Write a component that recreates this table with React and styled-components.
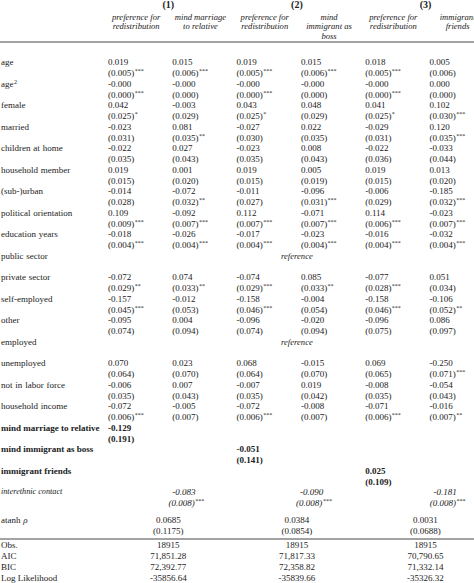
import React from 'react';
import styled, {createGlobalStyle, css} from 'styled-components';

const Global = createGlobalStyle`
  html, body {
    margin: 0;
    padding: 0;
    background: #fff;
    overflow: hidden;
  }
`;

const serif = css`
  font-family: "Liberation Serif", "Times New Roman", serif;
  color: #222;
`;

const Table = styled.div`
  ${serif}
  display: grid;
  grid-template-columns: 104px repeat(6, 64.3px);
  width: 490px;
  font-size: 9px;
  line-height: 10.75px;
`;

const ModelNo = styled.div`
  grid-column: span 2;
  text-align: center;
  font-size: 10px;
  font-weight: 700;
  line-height: 9px;
  height: 12.5px;
`;

const Blank = styled.div`
  grid-column: ${p => p.$span || 1} span;
`;

const Head = styled.div`
  font-style: italic;
  font-size: 8.6px;
  line-height: 9.5px;
  text-align: center;
  height: 28.5px;
`;

const Rule = styled.div`
  grid-column: 1 / -1;
  height: 2px;
  background: #a3a3a3;
  margin: ${p => p.$margin || '0'};
`;

const Label = styled.div`
  white-space: nowrap;
  padding-left: 1px;
  font-size: ${p => (p.$italic ? 8.2 : 9)}px;
  word-spacing: ${p => (p.$small || p.$italic || p.$bold ? 0 : 0.6)}px;
  font-weight: ${p => (p.$bold ? 700 : 400)};
  font-style: ${p => (p.$italic ? 'italic' : 'normal')};
  margin-top: ${p => p.$top || 0}px;
`;

const Cell = styled.div`
  padding-left: 4px;
  white-space: nowrap;
  font-weight: ${p => (p.$bold ? 700 : 400)};
`;

const Line = styled.div`
  height: 10.75px;
`;

const Pair = styled.div`
  grid-column: span 2;
  white-space: nowrap;
  text-align: ${p => p.$align || 'center'};
  padding-right: ${p => p.$right || 0}px;
  font-style: ${p => (p.$italic ? 'italic' : 'normal')};
  margin-top: ${p => p.$top || 0}px;
`;

const Reference = styled.div`
  grid-column: span 6;
  font-style: italic;
  font-size: 8.6px;
  text-align: center;
  height: 21.5px;
`;

const Stars = styled.sup`
  font-size: 6px;
  line-height: 0;
  vertical-align: 3px;
  margin-left: 0.4px;
  margin-right: ${p => (p.$hang ? '-8.5px' : '0')};
`;

const Spacer = styled.div`
  grid-column: 1 / -1;
  height: 14.4px;
`;

const rows = [
  {label: 'age', v: [['0.019', '(0.005)', '***'], ['0.015', '(0.006)', '***'], ['0.019', '(0.005)', '***'], ['0.015', '(0.006)', '***'], ['0.018', '(0.005)', '***'], ['0.005', '(0.006)', '']]},
  {label: 'age', sq: true, v: [['-0.000', '(0.000)', '***'], ['-0.000', '(0.000)', ''], ['-0.000', '(0.000)', '***'], ['-0.000', '(0.000)', ''], ['-0.000', '(0.000)', '***'], ['0.000', '(0.000)', '']]},
  {label: 'female', v: [['0.042', '(0.025)', '*'], ['-0.003', '(0.029)', ''], ['0.043', '(0.025)', '*'], ['0.048', '(0.029)', ''], ['0.041', '(0.025)', '*'], ['0.102', '(0.030)', '***']]},
  {label: 'married', v: [['-0.023', '(0.031)', ''], ['0.081', '(0.035)', '**'], ['-0.027', '(0.030)', ''], ['0.022', '(0.035)', ''], ['-0.029', '(0.031)', ''], ['0.120', '(0.035)', '***']]},
  {label: 'children at home', v: [['-0.022', '(0.035)', ''], ['0.027', '(0.043)', ''], ['-0.023', '(0.035)', ''], ['0.008', '(0.043)', ''], ['-0.022', '(0.036)', ''], ['-0.033', '(0.044)', '']]},
  {label: 'household member', v: [['0.019', '(0.015)', ''], ['0.001', '(0.020)', ''], ['0.019', '(0.015)', ''], ['0.005', '(0.019)', ''], ['0.019', '(0.015)', ''], ['0.013', '(0.020)', '']]},
  {label: '(sub-)urban', v: [['-0.014', '(0.028)', ''], ['-0.072', '(0.032)', '**'], ['-0.011', '(0.027)', ''], ['-0.096', '(0.031)', '***'], ['-0.006', '(0.029)', ''], ['-0.185', '(0.032)', '***']]},
  {label: 'political orientation', v: [['0.109', '(0.009)', '***'], ['-0.092', '(0.007)', '***'], ['0.112', '(0.007)', '***'], ['-0.071', '(0.007)', '***'], ['0.114', '(0.006)', '***'], ['-0.023', '(0.007)', '***']]},
  {label: 'education years', v: [['-0.018', '(0.004)', '***'], ['-0.026', '(0.004)', '***'], ['-0.017', '(0.004)', '***'], ['-0.023', '(0.004)', '***'], ['-0.016', '(0.004)', '***'], ['-0.032', '(0.004)', '***']]},
  {label: 'public sector', reference: true},
  {label: 'private sector', v: [['-0.072', '(0.029)', '**'], ['0.074', '(0.033)', '**'], ['-0.074', '(0.029)', '***'], ['0.085', '(0.033)', '**'], ['-0.077', '(0.028)', '***'], ['0.051', '(0.034)', '']]},
  {label: 'self-employed', v: [['-0.157', '(0.045)', '***'], ['-0.012', '(0.053)', ''], ['-0.158', '(0.046)', '***'], ['-0.004', '(0.054)', ''], ['-0.158', '(0.046)', '***'], ['-0.106', '(0.052)', '**']]},
  {label: 'other', v: [['-0.095', '(0.074)', ''], ['0.004', '(0.094)', ''], ['-0.096', '(0.074)', ''], ['-0.020', '(0.094)', ''], ['-0.096', '(0.075)', ''], ['0.086', '(0.097)', '']]},
  {label: 'employed', reference: true},
  {label: 'unemployed', v: [['0.070', '(0.064)', ''], ['0.023', '(0.070)', ''], ['0.068', '(0.064)', ''], ['-0.015', '(0.070)', ''], ['0.069', '(0.065)', ''], ['-0.250', '(0.071)', '***']]},
  {label: 'not in labor force', v: [['-0.006', '(0.035)', ''], ['0.007', '(0.043)', ''], ['-0.007', '(0.035)', ''], ['0.019', '(0.042)', ''], ['-0.008', '(0.035)', ''], ['-0.054', '(0.043)', '']]},
  {label: 'household income', v: [['-0.072', '(0.006)', '***'], ['-0.005', '(0.007)', ''], ['-0.072', '(0.006)', '***'], ['-0.008', '(0.007)', ''], ['-0.071', '(0.006)', '***'], ['-0.016', '(0.007)', '**']]},
  {label: 'mind marriage to relative', bold: true, v: [['-0.129', '(0.191)', ''], null, null, null, null, null]},
  {label: 'mind immigrant as boss', bold: true, v: [null, null, ['-0.051', '(0.141)', ''], null, null, null]},
  {label: 'immigrant friends', bold: true, v: [null, null, null, null, ['0.025', '(0.109)', ''], null]},
];

const contact = [['-0.083', 37], ['-0.090', 38], ['-0.181', 33]];
const atanh = [['0.0685', '(0.1175)'], ['0.0384', '(0.0854)'], ['0.0031', '(0.0688)']];
const stats = [
  ['Obs.', ['18915', '18915', '18915']],
  ['AIC', ['71,851.28', '71,817.33', '70,790.65']],
  ['BIC', ['72,392.77', '72,358.82', '71,332.14']],
  ['Log Likelihood', ['-35856.64', '-35839.66', '-35326.32']],
];

function Heads() {
  const titles = [
    ['preference for', 'redistribution'],
    ['mind marriage', 'to relative'],
    ['preference for', 'redistribution'],
    ['mind', 'immigrant as', 'boss'],
    ['preference for', 'redistribution'],
    ['immigrant', 'friends'],
  ];
  return titles.map((t, i) => (
    <Head key={i}>
      {t.map((s, j) => <div key={j}>{s}</div>)}
    </Head>
  ));
}

function VarRow({row}) {
  return (
    <>
      <Label $bold={row.bold}>
        {row.label}
        {row.sq && <Stars>2</Stars>}
      </Label>
      {row.reference ? (
        <Reference>reference</Reference>
      ) : (
        row.v.map((c, i) => (
          <Cell key={i} $bold={row.bold}>
            {c && (
              <>
                <Line>{c[0]}</Line>
                <Line>
                  {c[1]}
                  {c[2] && <Stars>{c[2]}</Stars>}
                </Line>
              </>
            )}
          </Cell>
        ))
      )}
    </>
  );
}

export default function App() {
  return (
    <>
      <Global />
      <Table>
        <Blank />
        <ModelNo>(1)</ModelNo>
        <ModelNo>(2)</ModelNo>
        <ModelNo>(3)</ModelNo>
        <Blank />
        <Heads />
        <Rule />
        <Spacer />
        {rows.map((r, i) => <VarRow key={i} row={r} />)}

        <Label $italic>interethnic contact</Label>
        {contact.map(([v, right], i) => (
          <Pair key={i} $italic $align="right" $right={right}>
            <Line>{v}</Line>
            <Line>
              (0.008)<Stars $hang>***</Stars>
            </Line>
          </Pair>
        ))}

        <Label $top={6}>atanh <i>ρ</i></Label>
        {atanh.map((a, i) => (
          <Pair key={i} $top={6}>
            <Line>{a[0]}</Line>
            <Line>{a[1]}</Line>
          </Pair>
        ))}

        <Rule $margin="2px 0 0" />
        {stats.map(([name, vals]) => (
          <React.Fragment key={name}>
            <Label $small>{name}</Label>
            {vals.map((v, i) => <Pair key={i}>{v}</Pair>)}
          </React.Fragment>
        ))}
      </Table>
    </>
  );
}
